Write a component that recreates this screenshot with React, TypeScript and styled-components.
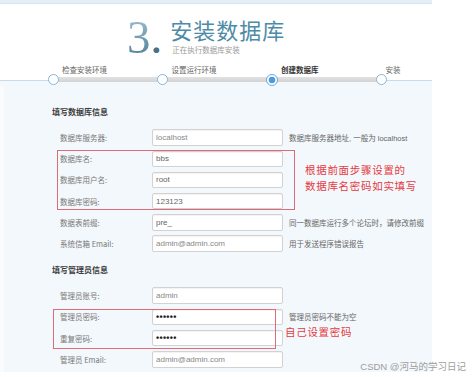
import React from "react";
import styled, { createGlobalStyle } from "styled-components";

const FONT = `"Liberation Sans", "Noto Sans CJK SC", sans-serif`;

const Global = createGlobalStyle`
  html, body { margin: 0; padding: 0; background: #ffffff; }
  body { width: 474px; height: 377px; overflow: hidden; font-family: ${FONT}; }
`;

const Root = styled.div`
  position: relative;
  width: 474px;
  height: 377px;
  background: #fff;
  overflow: hidden;
`;

const Frame = styled.div`
  width: 432px;
  display: flex;
  flex-direction: column;
`;

const TopBand = styled.div`
  height: 3px;
  background: #e4eef6;
  border-bottom: 1px solid #d6e5f0;
`;

const Header = styled.div`
  display: flex;
  flex-direction: column;
  background: #fff;
`;

const TitleRow = styled.div`
  display: flex;
  align-items: flex-start;
  padding: 10px 0 0 127px;
  gap: 8px;
  height: 51.5px;
`;

const Numeral = styled.div`
  font-family: "Liberation Serif", serif;
  font-size: 47px;
  line-height: 47px;
  height: 47px;
  background: linear-gradient(180deg, #a3c2d2 0%, #6f9bb1 55%, #4d7c94 100%);
  -webkit-background-clip: text;
  background-clip: text;
  color: transparent;
`;

const Dot = styled.span`
  color: #4b6f84;
  -webkit-text-fill-color: #4b6f84;
`;

const TitleText = styled.div`
  display: flex;
  flex-direction: column;
  padding-top: 4px;
`;

const Heading = styled.h1`
  margin: 0;
  font-family: "Noto Sans CJK SC", sans-serif;
  font-weight: 400;
  font-size: 22px;
  line-height: 22px;
  letter-spacing: 1px;
  color: #4e8ba7;
`;

const Sub = styled.div`
  margin: 4.5px 0 0 2px;
  font-family: "Noto Sans CJK SC", sans-serif;
  font-size: 7.5px;
  line-height: 10px;
  color: #9a9a9a;
`;

const StepLabels = styled.div`
  display: grid;
  grid-template-columns: repeat(3, 109.5px) 40px;
  padding-left: 62px;
  height: 8px;
`;

const StepLabel = styled.div<{ $active?: boolean; $shift?: number }>`
  font-family: "Noto Sans CJK SC", sans-serif;
  font-size: 7.5px;
  line-height: 8px;
  white-space: nowrap;
  margin-left: ${(p) => p.$shift ?? 0}px;
  color: ${(p) => (p.$active ? "#333" : "#666")};
  font-weight: ${(p) => (p.$active ? 700 : 400)};
`;

const TrackRow = styled.div`
  height: 12px;
  display: flex;
  align-items: center;
  padding-left: 48px;
  background: linear-gradient(
    180deg,
    #ffffff 0,
    #ffffff 5.5px,
    #c7dbea 5.5px,
    #c7dbea 6.5px,
    #f3f8fc 6.5px
  );
`;

const Bar = styled.div`
  width: 339px;
  height: 12px;
  display: flex;
  align-items: center;
  justify-content: space-between;
  background: linear-gradient(180deg, #e2e2e2, #d2d2d2) center / calc(100% - 10px) 5px
    no-repeat;
`;

const Node = styled.div<{ $active?: boolean }>`
  box-sizing: border-box;
  width: ${(p) => (p.$active ? 12 : 11)}px;
  height: ${(p) => (p.$active ? 12 : 11)}px;
  border-radius: 50%;
  border: 1.5px solid ${(p) => (p.$active ? "#6aa9dc" : "#86b6dc")};
  background: ${(p) =>
    p.$active ? "radial-gradient(circle, #4f9be0 0 3.3px, #ffffff 3.6px)" : "#ffffff"};
`;

const Panel = styled.div`
  background: #f3f8fc;
  border-left: 4px solid #f9fbfd;
  padding: 20px 0 2px 48px;
  display: flex;
  flex-direction: column;
`;

const SectionTitle = styled.div<{ $top?: number }>`
  font-family: "Noto Sans CJK SC", sans-serif;
  font-size: 8px;
  line-height: 12px;
  font-weight: 700;
  color: #3e3e3e;
  margin-top: ${(p) => p.$top ?? 0}px;
  margin-bottom: 9.5px;
`;

const Rows = styled.div`
  display: flex;
  flex-direction: column;
  padding-left: 8px;
`;

const Row = styled.div`
  display: grid;
  grid-template-columns: 86px 131px auto;
  column-gap: 6px;
  align-items: center;
  height: 21.2px;
`;

const Label = styled.div`
  font-family: "Noto Sans CJK SC", sans-serif;
  font-size: 7.5px;
  color: #777;
  white-space: nowrap;
`;

const Field = styled.div<{ $secret?: boolean; $light?: boolean }>`
  box-sizing: border-box;
  height: 16.5px;
  border: 1px solid #d2d2d2;
  border-radius: 2px;
  background: #fff;
  box-shadow: inset 0 1px 1px rgba(0, 0, 0, 0.05);
  display: flex;
  align-items: center;
  padding-left: 3px;
  font-family: ${FONT};
  font-size: ${(p) => (p.$secret ? 9 : 8)}px;
  font-weight: ${(p) => (p.$secret ? 700 : 400)};
  letter-spacing: ${(p) => (p.$secret ? 0.3 : 0)}px;
  color: ${(p) => (p.$secret ? "#1e1e1e" : p.$light ? "#888" : "#666")};
`;

const Note = styled.div`
  font-family: ${FONT};
  font-size: 7.5px;
  color: #666;
  white-space: nowrap;
`;

const Highlight = styled.div<{ $top: number; $bottom: number; $left: number; $width: number }>`
  position: relative;
  display: flex;
  flex-direction: column;
  &::before {
    content: "";
    position: absolute;
    top: ${(p) => p.$top}px;
    bottom: ${(p) => p.$bottom}px;
    left: ${(p) => p.$left}px;
    width: ${(p) => p.$width}px;
    border: 1px solid #df6b76;
    box-sizing: border-box;
    pointer-events: none;
  }
`;

const Annotation = styled.div<{ $x: number; $y: number }>`
  position: absolute;
  left: ${(p) => p.$x}px;
  top: ${(p) => p.$y}px;
  display: flex;
  flex-direction: column;
  font-family: "Noto Sans CJK SC", sans-serif;
  font-size: 10.5px;
  line-height: 15.2px;
  letter-spacing: 0.7px;
  color: #e63a42;
  white-space: nowrap;
`;

const Watermark = styled.div`
  position: absolute;
  right: 8px;
  bottom: 4px;
  font-family: ${FONT};
  font-size: 9.5px;
  line-height: 12px;
  color: #9d9d9d;
  white-space: nowrap;
`;

type RowData = { label: string; value: string; note?: string; secret?: boolean; light?: boolean };

const FormRow = ({ label, value, note, secret, light }: RowData) => (
  <Row>
    <Label>{label}</Label>
    <Field $secret={secret} $light={light}>
      {value}
    </Field>
    {note ? <Note>{note}</Note> : null}
  </Row>
);

const steps = ["检查安装环境", "设置运行环境", "创建数据库", "安装"];
const ACTIVE = 2;

export default function App() {
  return (
    <Root>
      <Global />
      <Frame>
        <TopBand />
        <Header>
          <TitleRow>
            <Numeral>
              3<Dot>.</Dot>
            </Numeral>
            <TitleText>
              <Heading>安装数据库</Heading>
              <Sub>正在执行数据库安装</Sub>
            </TitleText>
          </TitleRow>
          <StepLabels>
            {steps.map((s, i) => (
              <StepLabel key={s} $active={i === ACTIVE} $shift={i === 3 ? -5 : 0}>
                {s}
              </StepLabel>
            ))}
          </StepLabels>
        </Header>
        <TrackRow>
          <Bar>
            {steps.map((s, i) => (
              <Node key={s} $active={i === ACTIVE} />
            ))}
          </Bar>
        </TrackRow>
        <Panel>
          <SectionTitle>填写数据库信息</SectionTitle>
          <Rows>
            <FormRow
              label="数据库服务器:"
              value="localhost"
              light
              note="数据库服务器地址, 一般为 localhost"
            />
            <Highlight $top={1.5} $bottom={2} $left={-3} $width={238}>
              <FormRow label="数据库名:" value="bbs" />
              <FormRow label="数据库用户名:" value="root" />
              <FormRow label="数据库密码:" value="123123" />
              <Annotation $x={245} $y={14.3}>
                <span>根据前面步骤设置的</span>
                <span>数据库名密码如实填写</span>
              </Annotation>
            </Highlight>
            <FormRow label="数据表前缀:" value="pre_" note="同一数据库运行多个论坛时，请修改前缀" />
            <FormRow label="系统信箱 Email:" value="admin@admin.com" light note="用于发送程序错误报告" />
          </Rows>
          <SectionTitle $top={9.5}>填写管理员信息</SectionTitle>
          <Rows>
            <FormRow label="管理员账号:" value="admin" light />
            <Highlight $top={3} $bottom={0} $left={-7} $width={223}>
              <FormRow label="管理员密码:" value="••••••" secret note="管理员密码不能为空" />
              <FormRow label="重复密码:" value="••••••" secret />
              <Annotation $x={225} $y={18}>
                <span>自己设置密码</span>
              </Annotation>
            </Highlight>
            <FormRow label="管理员 Email:" value="admin@admin.com" light />
          </Rows>
        </Panel>
      </Frame>
      <Watermark>CSDN @河马的学习日记</Watermark>
    </Root>
  );
}
